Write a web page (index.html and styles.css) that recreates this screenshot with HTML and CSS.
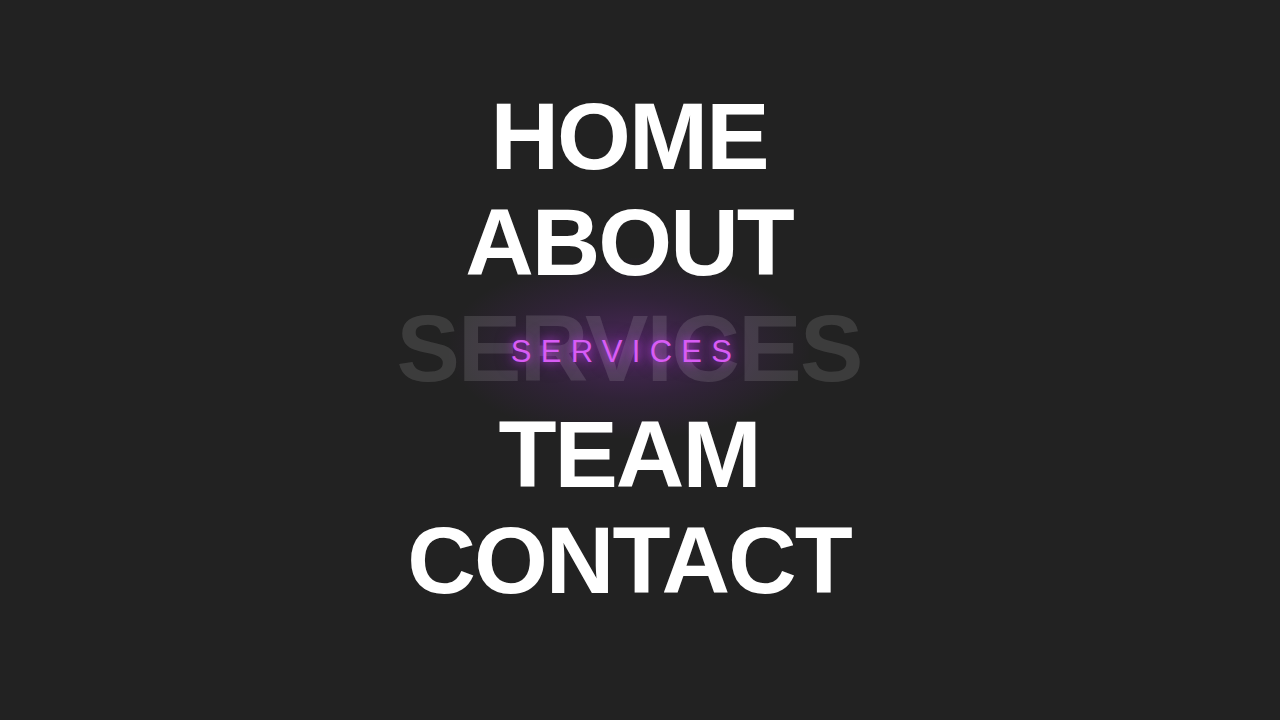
FILE: index.html
```html
<!DOCTYPE html>
<html lang="en">
<head>
<meta charset="utf-8">
<title>Menu</title>
<link rel="stylesheet" href="styles.css">
</head>
<body>
<nav class="menu">
  <ul class="menu-list">
    <li class="menu-item"><a href="#" class="menu-link">HOME</a></li>
    <li class="menu-item"><a href="#" class="menu-link">ABOUT</a></li>
    <li class="menu-item is-active">
      <a href="#" class="menu-link">SERVICES</a>
      <span class="glow"></span>
      <span class="label">SERVICES</span>
    </li>
    <li class="menu-item"><a href="#" class="menu-link">TEAM</a></li>
    <li class="menu-item"><a href="#" class="menu-link">CONTACT</a></li>
  </ul>
</nav>
</body>
</html>
```
FILE: styles.css
```css
html, body {
  margin: 0;
  padding: 0;
  height: 100%;
  background: #222222;
}
body {
  font-family: "Liberation Sans", Arial, sans-serif;
  overflow: hidden;
}
.menu {
  padding-top: 83px;
  padding-right: 22px;
}
.menu-list {
  list-style: none;
  margin: 0;
  padding: 0;
  display: flex;
  flex-direction: column;
  align-items: center;
}
.menu-item {
  position: relative;
  font-size: 95px;
  font-weight: 700;
  line-height: 106px;
  letter-spacing: -2px;
}
.menu-link {
  color: #ffffff;
  text-decoration: none;
  position: relative;
  z-index: 1;
}
.is-active .menu-link {
  color: rgba(255, 255, 255, 0.12);
  letter-spacing: -1.7px;
}
.glow {
  position: absolute;
  left: 50%;
  top: 50%;
  width: 360px;
  height: 180px;
  transform: translate(-50%, -50%);
  background: radial-gradient(ellipse at center, rgba(160, 50, 210, 0.32) 0%, rgba(130, 40, 180, 0.15) 40%, rgba(34, 34, 34, 0) 72%);
  z-index: 0;
  pointer-events: none;
}
.label {
  position: absolute;
  left: 50%;
  top: 50%;
  transform: translate(-50%, -50%);
  margin-top: 3px;
  margin-left: -3px;
  font-size: 31px;
  font-weight: 400;
  letter-spacing: 0.3em;
  color: #d85cf5;
  text-shadow: 0 0 8px rgba(200, 60, 240, 0.8), 0 0 18px rgba(180, 50, 230, 0.5);
  white-space: nowrap;
  z-index: 2;
  line-height: 1;
}
```
